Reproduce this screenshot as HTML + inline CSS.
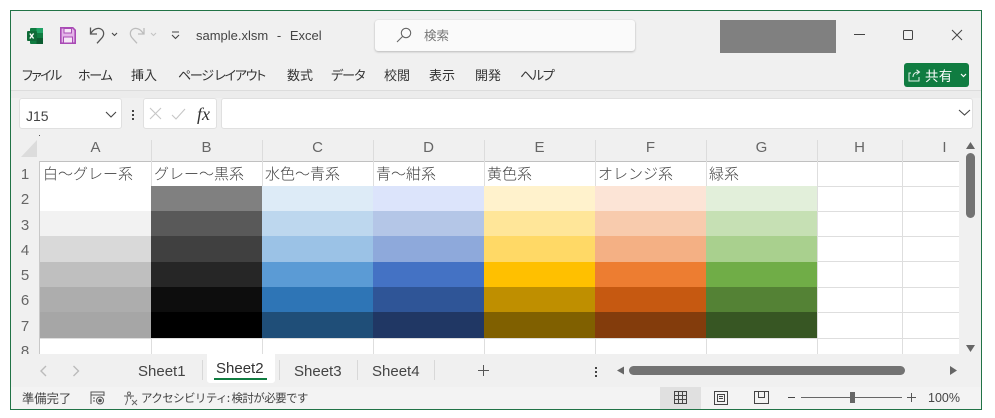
<!DOCTYPE html>
<html><head><meta charset="utf-8">
<style>
*{box-sizing:border-box}
html,body{margin:0;padding:0;background:#fff;width:995px;height:418px;overflow:hidden}
body{position:relative;font-family:"Liberation Sans","Noto Sans CJK JP",sans-serif;color:#333}
.a{position:absolute;white-space:nowrap}
.t{position:absolute;white-space:nowrap;line-height:16px}
.c{position:absolute;white-space:nowrap;font-size:15px;line-height:24px;color:#444;font-family:"Noto Sans CJK JP","Liberation Sans",sans-serif;font-weight:300}
.h{position:absolute;text-align:center;font-size:15px;color:#666;line-height:20px}
.m{font-size:13px;top:67px;color:#333;font-family:"Noto Sans CJK JP",sans-serif}
svg{position:absolute;overflow:visible}
.tab{position:absolute;font-size:15px;color:#444;top:363px;line-height:17px}
.sep{position:absolute;width:1px;background:#d8d8d8;top:360px;height:20px}
</style></head><body>
<div class="a" style="left:10px;top:10px;width:972px;height:400px;background:#f0f0f0;border:1px solid #217346"></div>

<svg style="left:26px;top:27px" width="18" height="18" viewBox="0 0 18 18"><rect x="4" y="1" width="13" height="16" rx="1" fill="#107c41"/><rect x="10.500" y="1" width="6.500" height="5" fill="#21a366"/><rect x="10.500" y="11" width="6.500" height="6" fill="#0b5c30"/><rect x="1" y="4" width="10" height="10" rx="1" fill="#0f6b38"/><path d="M3.800 6.500l3.800 5M7.600 6.500l-3.800 5" stroke="#fff" stroke-width="1.400"/></svg>
<svg style="left:60px;top:27px" width="16" height="17" viewBox="0 0 16 17"><path d="M.8.800h12l2.400 2.400v13H.8z" fill="#e3b4e8" stroke="#a94bb5" stroke-width="1.600"/><rect x="4" y="1.500" width="7.500" height="4.500" fill="#f5e6f6" stroke="#a94bb5"/><rect x="3.500" y="10" width="9" height="6" fill="#f5e6f6" stroke="#a94bb5"/></svg>
<svg style="left:89px;top:26px" width="18" height="19" viewBox="0 0 18 19" fill="none" stroke="#555" stroke-width="1.300"><path d="M1.500 1.500v6.500h6.500M1.500 8C4 3.500 8 1.500 11.500 2.800c4 1.700 4 6.500 1 9.500l-4.500 5"/></svg>
<svg style="left:111px;top:32px" width="7" height="5"><path d="M1 1l2.500 2.500L6 1" fill="none" stroke="#444" stroke-width="1.100"/></svg>
<svg style="left:129px;top:26px" width="18" height="19" viewBox="0 0 18 19" fill="none" stroke="#bcbcbc" stroke-width="1.300"><path d="M15 2v6H9M14.500 8C12 3.500 8 1.500 4.500 2.800c-4 1.700-4 6.500-1 9.500l4.500 5"/></svg>
<svg style="left:150px;top:32px" width="7" height="5"><path d="M1 1l2.500 2.500L6 1" fill="none" stroke="#c4c4c4" stroke-width="1.100"/></svg>
<svg style="left:171px;top:31px" width="9" height="9"><path d="M1 1h7" stroke="#444"/><path d="M1 4l3.500 3.500L8 4" fill="none" stroke="#444" stroke-width="1.100"/></svg>
<div class="t" style="left:196px;top:28px;font-size:13px;color:#444;word-spacing:.7px">sample.xlsm &nbsp;-&nbsp; Excel</div>

<div class="a" style="left:375px;top:20px;width:260px;height:31px;background:#fafafa;border-radius:3px;box-shadow:0 1px 2px #bbb,0 0 1px #ccc"></div>
<svg style="left:396px;top:27px" width="16" height="17" fill="none" stroke="#666" stroke-width="1.100"><circle cx="10" cy="6" r="4.700"/><path d="M6.500 9.500L1 15"/></svg>
<div class="t" style="left:424px;top:27px;font-size:12.500px;color:#777;font-family:'Noto Sans CJK JP',sans-serif">検索</div>

<div class="a" style="left:720px;top:20px;width:116px;height:33px;background:#808080"></div>
<div class="a" style="left:854px;top:34px;width:11px;height:1px;background:#444"></div>
<div class="a" style="left:903px;top:30px;width:10px;height:10px;border:1px solid #444;border-radius:1.500px"></div>
<svg style="left:951px;top:29px" width="12" height="12"><path d="M1 1l10 10M11 1L1 11" stroke="#444" stroke-width="1"/></svg>

<div class="t m" style="left:22px;font-feature-settings:'palt';letter-spacing:-1.600px">ファイル</div>
<div class="t m" style="left:78px;font-feature-settings:'palt';letter-spacing:-1.200px">ホーム</div>
<div class="t m" style="left:131px">挿入</div>
<div class="t m" style="left:178px;font-feature-settings:'palt';letter-spacing:-1.250px">ページ レイアウト</div>
<div class="t m" style="left:287px">数式</div>
<div class="t m" style="left:331px;font-feature-settings:'palt';letter-spacing:-.9px">データ</div>
<div class="t m" style="left:384px">校閲</div>
<div class="t m" style="left:429px">表示</div>
<div class="t m" style="left:475px">開発</div>
<div class="t m" style="left:520px;font-feature-settings:'palt';letter-spacing:-1.300px">ヘルプ</div>

<div class="a" style="left:904px;top:63px;width:65px;height:24px;background:#107c41;border-radius:3px"></div>
<svg style="left:908px;top:69px" width="14" height="13" fill="none" stroke="#e4f2ea" stroke-width="1"><path d="M3 4H1v8h10V8M5 8c0-3 2-5 6-5M8.500 .8L11.500 3 8.500 5.500"/></svg>
<div class="t" style="left:925px;top:67px;font-size:13.500px;color:#fff;font-family:'Noto Sans CJK JP',sans-serif;letter-spacing:.3px">共有</div>
<svg style="left:960px;top:73px" width="7" height="5"><path d="M1 1l2.500 2.500L6 1" fill="none" stroke="#fff" stroke-width="1.200"/></svg>

<div class="a" style="left:11px;top:90px;width:970px;height:1px;background:#dcdcdc"></div>
<div class="a" style="left:11px;top:91px;width:970px;height:7px;background:#ececec"></div>
<div class="a" style="left:19px;top:98px;width:103px;height:31px;background:#fff;border:1px solid #e0e0e0;border-radius:3px"></div>
<div class="t" style="left:26px;top:108px;font-size:14px;color:#444">J15</div>
<svg style="left:105px;top:111px" width="12" height="7"><path d="M1 1l5 5 5-5" fill="none" stroke="#444" stroke-width="1.100"/></svg>
<div class="a" style="left:131.500px;top:110px;width:2px;height:2px;background:#444;box-shadow:0 4px 0 #444,0 8px 0 #444"></div>
<div class="a" style="left:143px;top:98px;width:74px;height:31px;background:#fff;border:1px solid #e0e0e0;border-radius:3px"></div>
<svg style="left:149px;top:107px" width="40" height="14" fill="none" stroke="#c6c6c6" stroke-width="1.100"><path d="M1 1l11 11M12 1L1 12M23 8l4 4 9-10"/></svg>
<div class="t" style="left:197px;top:106px;font-size:18px;font-family:'Liberation Serif',serif;font-style:italic;color:#333">fx</div>
<div class="a" style="left:221px;top:98px;width:752px;height:31px;background:#fff;border:1px solid #e0e0e0;border-radius:3px"></div>
<svg style="left:958px;top:109px" width="13" height="7"><path d="M1 1l5.500 5L12 1" fill="none" stroke="#444" stroke-width="1.100"/></svg>

<svg style="left:20px;top:139px" width="18" height="18"><path d="M17 1v17H1z" fill="#dcdcdc"/></svg>
<div class="a" style="left:39px;top:135px;width:1px;height:1px;background:#555"></div>

<div class="a" style="left:40px;top:161px;width:919px;height:193px;background:#fff"></div>
<div class="a" style="left:40px;top:161px;width:919px;height:1px;background:#c0c0c0"></div>
<div class="a" style="left:39px;top:161px;width:1px;height:193px;background:#c8c8c8"></div>

<div class="h" style="left:40px;top:138px;width:111px">A</div>
<div class="h" style="left:151px;top:138px;width:111px">B</div>
<div class="h" style="left:262px;top:138px;width:111px">C</div>
<div class="h" style="left:373px;top:138px;width:111px">D</div>
<div class="h" style="left:484px;top:138px;width:111px">E</div>
<div class="h" style="left:595px;top:138px;width:111px">F</div>
<div class="h" style="left:706px;top:138px;width:111px">G</div>
<div class="h" style="left:817px;top:138px;width:85px">H</div>
<div class="h" style="left:902px;top:138px;width:85px">I</div>

<div class="a" style="left:151px;top:140px;width:1px;height:21px;background:#dcdcdc"></div>
<div class="a" style="left:262px;top:140px;width:1px;height:21px;background:#dcdcdc"></div>
<div class="a" style="left:373px;top:140px;width:1px;height:21px;background:#dcdcdc"></div>
<div class="a" style="left:484px;top:140px;width:1px;height:21px;background:#dcdcdc"></div>
<div class="a" style="left:595px;top:140px;width:1px;height:21px;background:#dcdcdc"></div>
<div class="a" style="left:706px;top:140px;width:1px;height:21px;background:#dcdcdc"></div>
<div class="a" style="left:817px;top:140px;width:1px;height:21px;background:#dcdcdc"></div>
<div class="a" style="left:902px;top:140px;width:1px;height:21px;background:#dcdcdc"></div>

<div class="h" style="left:15px;top:165px;width:20px;font-size:15px">1</div>
<div class="h" style="left:15px;top:190px;width:20px;font-size:15px">2</div>
<div class="h" style="left:15px;top:216px;width:20px;font-size:15px">3</div>
<div class="h" style="left:15px;top:241px;width:20px;font-size:15px">4</div>
<div class="h" style="left:15px;top:266px;width:20px;font-size:15px">5</div>
<div class="h" style="left:15px;top:291px;width:20px;font-size:15px">6</div>
<div class="h" style="left:15px;top:317px;width:20px;font-size:15px">7</div>
<div class="h" style="left:15px;top:342px;width:20px;font-size:15px;height:12px;overflow:hidden">8</div>

<div class="c" style="left:43px;top:162px">白～グレー系</div>
<div class="c" style="left:154px;top:162px">グレー～黒系</div>
<div class="c" style="left:265px;top:162px">水色～青系</div>
<div class="c" style="left:376px;top:162px">青～紺系</div>
<div class="c" style="left:487px;top:162px">黄色系</div>
<div class="c" style="left:598px;top:162px">オレンジ系</div>
<div class="c" style="left:709px;top:162px">緑系</div>

<svg style="left:40px;top:161px" width="919" height="193" shape-rendering="crispEdges">
<g stroke="#dedede" stroke-width="1">
<path d="M0 25.500H919M0 50.500H919M0 75.500H919M0 100.500H919M0 126.500H919M0 151.500H919M0 177.500H919"/>
<path d="M111.500 0V193M222.500 0V193M333.500 0V193M444.500 0V193M555.500 0V193M666.500 0V193M777.500 0V193M862.500 0V193"/>
</g>
<g>
<rect x="0" y="25" width="111" height="25" fill="#ffffff"/><rect x="0" y="50" width="111" height="25" fill="#f2f2f2"/><rect x="0" y="75" width="111" height="26" fill="#d9d9d9"/><rect x="0" y="101" width="111" height="25" fill="#bfbfbf"/><rect x="0" y="126" width="111" height="25" fill="#adadad"/><rect x="0" y="151" width="111" height="26" fill="#a6a6a6"/>
<rect x="111" y="25" width="111" height="25" fill="#808080"/><rect x="111" y="50" width="111" height="25" fill="#595959"/><rect x="111" y="75" width="111" height="26" fill="#404040"/><rect x="111" y="101" width="111" height="25" fill="#262626"/><rect x="111" y="126" width="111" height="25" fill="#0d0d0d"/><rect x="111" y="151" width="111" height="26" fill="#000000"/>
<rect x="222" y="25" width="111" height="25" fill="#ddebf7"/><rect x="222" y="50" width="111" height="25" fill="#bdd7ee"/><rect x="222" y="75" width="111" height="26" fill="#9bc2e6"/><rect x="222" y="101" width="111" height="25" fill="#5b9bd5"/><rect x="222" y="126" width="111" height="25" fill="#2e75b6"/><rect x="222" y="151" width="111" height="26" fill="#1f4e78"/>
<rect x="333" y="25" width="111" height="25" fill="#dce4fb"/><rect x="333" y="50" width="111" height="25" fill="#b4c6e7"/><rect x="333" y="75" width="111" height="26" fill="#8ea9db"/><rect x="333" y="101" width="111" height="25" fill="#4472c4"/><rect x="333" y="126" width="111" height="25" fill="#2f5597"/><rect x="333" y="151" width="111" height="26" fill="#203764"/>
<rect x="444" y="25" width="111" height="25" fill="#fff2cc"/><rect x="444" y="50" width="111" height="25" fill="#ffe699"/><rect x="444" y="75" width="111" height="26" fill="#ffd966"/><rect x="444" y="101" width="111" height="25" fill="#ffc000"/><rect x="444" y="126" width="111" height="25" fill="#bf8f00"/><rect x="444" y="151" width="111" height="26" fill="#806000"/>
<rect x="555" y="25" width="111" height="25" fill="#fce4d6"/><rect x="555" y="50" width="111" height="25" fill="#f8cbad"/><rect x="555" y="75" width="111" height="26" fill="#f4b084"/><rect x="555" y="101" width="111" height="25" fill="#ed7d31"/><rect x="555" y="126" width="111" height="25" fill="#c65911"/><rect x="555" y="151" width="111" height="26" fill="#833c0c"/>
<rect x="666" y="25" width="111" height="25" fill="#e2efda"/><rect x="666" y="50" width="111" height="25" fill="#c6e0b4"/><rect x="666" y="75" width="111" height="26" fill="#a9d08e"/><rect x="666" y="101" width="111" height="25" fill="#70ad47"/><rect x="666" y="126" width="111" height="25" fill="#548235"/><rect x="666" y="151" width="111" height="26" fill="#375623"/>
</g>
</svg>

<svg style="left:965px;top:141px" width="11" height="9"><path d="M5.500 1L10 8H1z" fill="#666"/></svg>
<div class="a" style="left:966px;top:153px;width:9px;height:65px;background:#737373;border-radius:4.500px"></div>
<svg style="left:965px;top:344px" width="11" height="9"><path d="M5.500 8L10 1H1z" fill="#666"/></svg>

<div class="a" style="left:11px;top:354px;width:970px;height:33px;background:#f0f0f0"></div>
<svg style="left:40px;top:365px" width="44" height="12" fill="none" stroke="#bbb" stroke-width="1.400"><path d="M6 1L1 6l5 5M33.500 1l5 5-5 5"/></svg>
<div class="tab" style="left:138px">Sheet1</div>
<div class="sep" style="left:202px"></div>
<div class="a" style="left:207px;top:354px;width:68px;height:29px;background:#fff;border-radius:0 0 3px 3px"></div>
<div class="tab" style="left:216px;top:360px;color:#333">Sheet2</div>
<div class="a" style="left:214px;top:378px;width:53px;height:2px;background:#107c41"></div>
<div class="sep" style="left:279px"></div>
<div class="tab" style="left:294px">Sheet3</div>
<div class="sep" style="left:357px"></div>
<div class="tab" style="left:372px">Sheet4</div>
<div class="sep" style="left:434px"></div>
<svg style="left:478px;top:365px" width="11" height="11"><path d="M5.500 0v11M0 5.500h11" stroke="#555" stroke-width="1"/></svg>
<div class="a" style="left:595px;top:367px;width:2px;height:2px;background:#444;box-shadow:0 4px 0 #444,0 8px 0 #444"></div>
<svg style="left:616px;top:366px" width="9" height="9"><path d="M1 4.500L8 .5v8z" fill="#666"/></svg>
<div class="a" style="left:629px;top:366px;width:276px;height:9px;background:#737373;border-radius:4.500px"></div>
<svg style="left:949px;top:365px" width="9" height="11"><path d="M8 5.500L1 1v9z" fill="#666"/></svg>

<div class="a" style="left:11px;top:387px;width:970px;height:22px;background:#f3f3f3"></div>
<div class="t" style="left:22px;top:390px;font-size:12.300px;color:#444;font-family:'Noto Sans CJK JP',sans-serif">準備完了</div>
<svg style="left:90px;top:391px" width="15" height="14" fill="none" stroke="#555" stroke-width="1"><path d="M1 13V1h13v4M1 4h13M3 7h2M3 10h2"/><circle cx="10" cy="9.500" r="3.500"/><circle cx="10" cy="9.500" r="1.300" fill="#555"/></svg>
<svg style="left:123px;top:391px" width="15" height="15" fill="none" stroke="#666" stroke-width="1"><circle cx="6" cy="2.500" r="1.500"/><path d="M1 5h10M4 5l.5 4L2.500 14M8 5l-.5 3M9 9l5 5M14 9l-5 5"/></svg>
<div class="t" style="left:141px;top:390px;font-size:11.500px;color:#444;font-family:'Noto Sans CJK JP',sans-serif;letter-spacing:-.6px">アクセシビリティ: 検討が必要です</div>

<div class="a" style="left:660px;top:387px;width:41px;height:22px;background:#e0e0e0"></div>
<svg style="left:674px;top:391px" width="13" height="13" fill="none" stroke="#444" stroke-width="1" shape-rendering="crispEdges"><path d="M.5.500h12v12H.500zM.5 4.500h12M.5 8.500h12M4.500.5v12M8.500.5v12"/></svg>
<svg style="left:714px;top:391px" width="14" height="14" fill="none" stroke="#444" stroke-width="1" shape-rendering="crispEdges"><path d="M.5.500h13v13H.500zM3.500 3.500h7v7h-7zM5 5.500h4M5 7.500h4"/></svg>
<svg style="left:754px;top:391px" width="15" height="13" fill="none" stroke="#444" stroke-width="1" shape-rendering="crispEdges"><path d="M.5.500h14v12H.500zM4.500.5v6h6V.5"/></svg>
<div class="a" style="left:788px;top:397px;width:7px;height:1px;background:#444"></div>
<div class="a" style="left:801px;top:397px;width:101px;height:1px;background:#666"></div>
<div class="a" style="left:850px;top:392px;width:5px;height:11px;background:#666"></div>
<svg style="left:907px;top:393px" width="9" height="9"><path d="M4.500 0v9M0 4.500h9" stroke="#555"/></svg>
<div class="t" style="left:928px;top:390px;font-size:12.500px;color:#444">100%</div>
</body></html>
